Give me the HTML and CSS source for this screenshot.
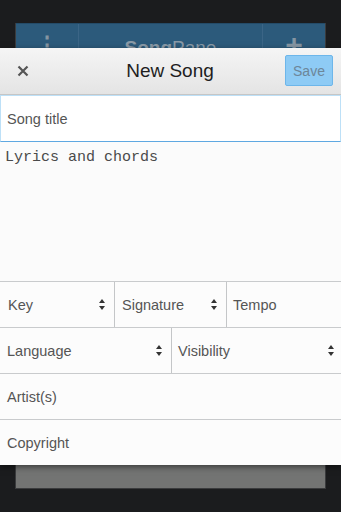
FILE: index.html
```html
<!DOCTYPE html>
<html>
<head>
<meta charset="utf-8">
<link rel="stylesheet" href="styles.css">
</head>
<body>
<div class="app">
  <div class="app-header">
    <div class="app-btn"><span class="dots">⋮</span></div>
    <div class="app-title"><b>Song</b>Pane</div>
    <div class="app-btn"><span class="plus">+</span></div>
  </div>
  <div class="app-body"></div>
</div>

<div class="modal">
  <div class="modal-header">
    <div class="close">
      <svg width="12" height="12" viewBox="0 0 12 12"><path d="M1.5 1.5 L10.5 10.5 M10.5 1.5 L1.5 10.5" stroke="#555" stroke-width="2.2" stroke-linecap="butt"/></svg>
    </div>
    <div class="modal-title">New Song</div>
    <div class="save">Save</div>
  </div>
  <div class="field title-field">Song title</div>
  <div class="lyrics">Lyrics and chords</div>
  <div class="row row3">
    <div class="cell">Key<span class="arrows"></span></div>
    <div class="cell">Signature<span class="arrows"></span></div>
    <div class="cell">Tempo</div>
  </div>
  <div class="row row2">
    <div class="cell">Language<span class="arrows"></span></div>
    <div class="cell">Visibility<span class="arrows"></span></div>
  </div>
  <div class="row"><div class="cell plain">Artist(s)</div></div>
  <div class="row"><div class="cell plain">Copyright</div></div>
</div>
</body>
</html>
```

FILE: styles.css
```css
html, body {
  margin: 0;
  padding: 0;
}
body {
  background: #1b1c1e;
  width: 341px;
  height: 512px;
  overflow: hidden;
  position: relative;
  font-family: "Liberation Sans", Arial, sans-serif;
  padding-top: 23px;
  box-sizing: border-box;
}
.app {
  margin: 0 15px;
  height: 466px;
  display: flex;
  flex-direction: column;
  border: 1px solid #3a3b3d;
  border-top: none;
  box-sizing: border-box;
}
.app-header {
  height: 44px;
  background: #2c5a7b;
  display: flex;
  border-top: 1px solid #244b68;
}
.app-btn {
  width: 62px;
  display: flex;
  justify-content: center;
  align-items: flex-start;
  color: #8595a2;
}
.app-btn:first-child {
  border-right: 1px solid #3b6586;
}
.app-btn:last-child {
  border-left: 1px solid #3b6586;
}
.dots {
  font-size: 22px;
  font-weight: bold;
  line-height: 1;
  margin-top: 10px;
}
.plus {
  font-size: 30px;
  font-weight: bold;
  line-height: 1;
  margin-top: 6px;
}
.app-title {
  flex: 1;
  text-align: center;
  color: #8a9aa7;
  font-size: 19px;
  padding-top: 13px;
}
.app-body {
  flex: 1;
  background: #737473;
  border-top: 1px solid #555;
}
.modal {
  position: absolute;
  top: 48px;
  left: 0;
  width: 341px;
  height: 417px;
  background: #fcfcfc;
  display: flex;
  flex-direction: column;
  box-shadow: 0 2px 6px rgba(0,0,0,0.5);
}
.modal-header {
  height: 46px;
  border-bottom: 1px solid #c6c6c6;
  background: linear-gradient(#f5f5f5, #e4e4e4);
  display: grid;
  grid-template-columns: 1fr auto 1fr;
  align-items: center;
  padding: 0 8px 0 17px;
}
.close {
  width: 12px;
  height: 12px;
  display: flex;
  margin-top: -1px;
}
.modal-title {
  text-align: center;
  font-size: 19px;
  color: #1e1e1e;
  padding-right: 10px;
}
.save {
  justify-self: end;
  width: 46px;
  height: 29px;
  background: #8ecbf5;
  border: 1px solid #6db6ea;
  border-radius: 2px;
  color: #6d8699;
  font-size: 14px;
  display: flex;
  align-items: center;
  justify-content: center;
  margin-bottom: 1px;
}
.field {
  height: 46px;
  box-sizing: border-box;
  display: flex;
  align-items: center;
  padding-left: 6px;
  font-size: 14.5px;
  color: #555;
}
.title-field {
  background: #fff;
  border: 1px solid #bde0f7;
  border-bottom: 1px solid #5fa8e1;
  height: 47px;
}
.lyrics {
  height: 139px;
  background: #fbfbfb;
  font-family: "Liberation Mono", "Courier New", monospace;
  font-size: 15px;
  color: #4a4a4a;
  padding: 7px 5px;
  box-sizing: border-box;
}
.row {
  height: 46px;
  display: flex;
  border-top: 1px solid #c9cbcd;
  box-sizing: border-box;
  background: #fcfcfc;
}
.cell {
  flex: 1;
  display: flex;
  align-items: center;
  justify-content: space-between;
  padding: 0 8px 0 8px;
  font-size: 14.5px;
  color: #555;
  border-left: 1px solid #c4c6c8;
}
.cell:first-child {
  border-left: none;
}
.row3 .cell:nth-child(1) { flex: 0 0 114px; box-sizing: border-box; }
.row3 .cell:nth-child(2) { flex: 0 0 112px; box-sizing: border-box; padding-left: 7px; }
.row3 .cell:nth-child(3) { padding-left: 6px; }
.row2 .cell:nth-child(1) { flex: 0 0 171px; box-sizing: border-box; padding-left: 7px; }
.row2 .cell:nth-child(2) { padding-left: 6px; padding-right: 6px; }
.plain {
  padding-left: 7px;
}
.arrows {
  width: 7px;
  height: 11px;
  position: relative;
}
.arrows::before, .arrows::after {
  content: "";
  position: absolute;
  left: 0;
  border-left: 3.5px solid transparent;
  border-right: 3.5px solid transparent;
}
.arrows::before {
  top: 0;
  border-bottom: 4.5px solid #333;
}
.arrows::after {
  bottom: 0;
  border-top: 4.5px solid #333;
}
```
